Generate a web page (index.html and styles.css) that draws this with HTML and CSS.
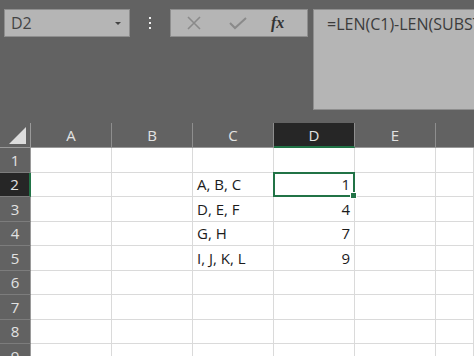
FILE: index.html
```html
<!DOCTYPE html>
<html>
<head>
<meta charset="utf-8">
<link rel="stylesheet" href="styles.css">
</head>
<body>
<div class="top">
  <div class="bar">
    <div class="namebox"><span class="name">D2</span><span class="caret"></span></div>
    <div class="grip"><i></i><i></i><i></i></div>
    <div class="fbtns">
      <svg class="ico" width="16" height="14" viewBox="0 0 16 14"><path d="M2 1 L14 13 M14 1 L2 13" stroke="#8a8a8a" stroke-width="1.6" fill="none"/></svg>
      <svg class="ico" width="18" height="14" viewBox="0 0 18 14"><path d="M1 7 L6 12 L17 2" stroke="#8a8a8a" stroke-width="2" fill="none"/></svg>
      <span class="fx">fx</span>
    </div>
    <div class="formula">=LEN(C1)-LEN(SUBSTITUTE(C1,",",""))+1</div>
  </div>
</div>
<div class="grid">
  <div class="corner"><svg width="18" height="18" viewBox="0 0 18 18"><polygon points="17,0 17,17 0,17" fill="#dcdcdc"/></svg></div>
  <div class="ch">A</div><div class="ch">B</div><div class="ch">C</div><div class="ch sel">D</div><div class="ch">E</div><div class="ch last"></div>

  <div class="rh">1</div><div class="c"></div><div class="c"></div><div class="c"></div><div class="c"></div><div class="c"></div><div class="c"></div>
  <div class="rh sel">2</div><div class="c"></div><div class="c"></div><div class="c">A, B, C</div><div class="c num active">1<span class="handle"></span></div><div class="c"></div><div class="c"></div>
  <div class="rh">3</div><div class="c"></div><div class="c"></div><div class="c">D, E, F</div><div class="c num">4</div><div class="c"></div><div class="c"></div>
  <div class="rh">4</div><div class="c"></div><div class="c"></div><div class="c">G, H</div><div class="c num">7</div><div class="c"></div><div class="c"></div>
  <div class="rh">5</div><div class="c"></div><div class="c"></div><div class="c">I, J, K, L</div><div class="c num">9</div><div class="c"></div><div class="c"></div>
  <div class="rh">6</div><div class="c"></div><div class="c"></div><div class="c"></div><div class="c"></div><div class="c"></div><div class="c"></div>
  <div class="rh">7</div><div class="c"></div><div class="c"></div><div class="c"></div><div class="c"></div><div class="c"></div><div class="c"></div>
  <div class="rh">8</div><div class="c"></div><div class="c"></div><div class="c"></div><div class="c"></div><div class="c"></div><div class="c"></div>
  <div class="rh">9</div><div class="c"></div><div class="c"></div><div class="c"></div><div class="c"></div><div class="c"></div><div class="c"></div>
</div>
</body>
</html>
```

FILE: styles.css
```css
html, body {
  margin: 0;
  padding: 0;
  background: #626262;
  width: 474px;
  height: 356px;
  overflow: hidden;
  font-family: "Open Sans", "Liberation Sans", sans-serif;
}
.top {
  height: 123px;
  box-sizing: border-box;
  padding-top: 9px;
}
.bar {
  display: flex;
  align-items: flex-start;
}
.namebox {
  margin-left: 4px;
  width: 126px;
  height: 28px;
  background: #b5b5b5;
  box-sizing: border-box;
  border: 1px solid #8e8e8e;
  display: flex;
  align-items: center;
  justify-content: space-between;
  padding: 0 8px 0 6px;
}
.name {
  font-size: 16px;
  color: #454545;
}
.caret {
  width: 0;
  height: 0;
  border-left: 3px solid transparent;
  border-right: 3px solid transparent;
  border-top: 3px solid #444;
}
.grip {
  width: 40px;
  height: 28px;
  display: flex;
  flex-direction: column;
  align-items: center;
  justify-content: center;
  gap: 3px;
}
.grip i {
  display: block;
  width: 2px;
  height: 2px;
  background: #f2f2f2;
}
.fbtns {
  width: 138px;
  height: 28px;
  background: #b5b5b5;
  box-sizing: border-box;
  border: 1px solid #8e8e8e;
  display: flex;
  align-items: center;
  padding-left: 15px;
  gap: 27px;
}
.fx {
  font-family: "Liberation Serif", serif;
  font-style: italic;
  font-weight: bold;
  font-size: 16px;
  color: #333;
  margin-left: -3px;
}
.formula {
  margin-left: 5px;
  flex: 1;
  height: 101px;
  background: #b5b5b5;
  box-sizing: border-box;
  border: 1px solid #8e8e8e;
  border-right: none;
  padding: 3px 0 0 13px;
  font-size: 16px;
  color: #3c3c3c;
  white-space: nowrap;
  overflow: hidden;
}
.grid {
  display: grid;
  grid-template-columns: 31px repeat(5, 81px) 1fr;
  grid-template-rows: 25px repeat(9, 24.5px);
  background: #fff;
}
.corner {
  background: #626262;
  box-sizing: border-box;
  border-right: 1px solid #9a9a9a;
  border-bottom: 1px solid #9a9a9a;
  display: flex;
  align-items: flex-end;
  justify-content: flex-end;
  padding: 0 3px 2px 0;
}
.corner svg { display: block; }
.ch {
  background: #626262;
  box-sizing: border-box;
  border-right: 1px solid #8e8e8e;
  border-bottom: 1px solid #9a9a9a;
  color: #e2e2e2;
  font-size: 15px;
  display: flex;
  align-items: center;
  justify-content: center;
}
.ch.sel {
  background: #262626;
  border-bottom: 2px solid #217346;
}
.ch.last { border-right: none; }
.rh {
  background: #626262;
  box-sizing: border-box;
  border-right: 1px solid #9a9a9a;
  border-bottom: 1px solid #7c7c7c;
  color: #e2e2e2;
  font-size: 15px;
  display: flex;
  align-items: center;
  justify-content: center;
}
.rh.sel {
  background: #262626;
  border-right: 2px solid #217346;
}
.c {
  box-sizing: border-box;
  border-right: 1px solid #dadada;
  border-bottom: 1px solid #dadada;
  font-size: 15px;
  color: #1c1c1c;
  display: flex;
  align-items: center;
  padding-left: 4px;
  white-space: nowrap;
}
.c.num {
  justify-content: flex-end;
  padding: 0 4px 0 0;
}
.active {
  position: relative;
}
.active::after {
  content: "";
  position: absolute;
  left: -1px;
  top: -1px;
  right: -1px;
  bottom: -1px;
  border: 2px solid #217346;
}
.handle {
  position: absolute;
  right: -3px;
  bottom: -3px;
  width: 5px;
  height: 5px;
  background: #217346;
  border: 1px solid #fff;
  z-index: 2;
}
```
